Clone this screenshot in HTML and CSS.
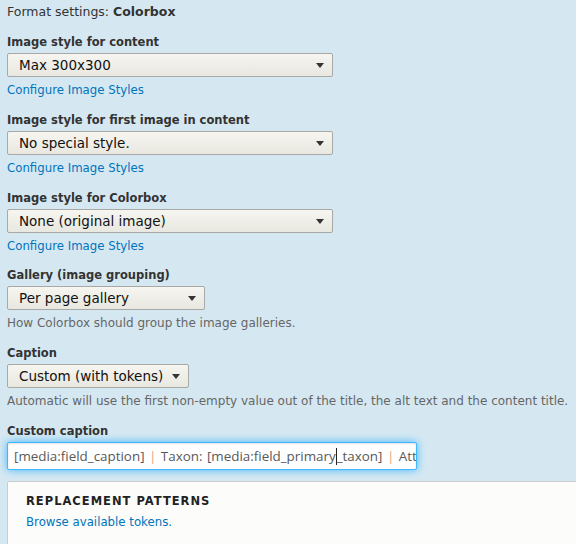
FILE: index.html
```html
<!DOCTYPE html>
<html>
<head>
<meta charset="utf-8">
<link rel="stylesheet" href="styles.css">
</head>
<body>
<div class="settings">
  <div class="title">Format settings: <strong>Colorbox</strong></div>

  <div class="item">
    <div class="label">Image style for content</div>
    <div class="select w-wide"><span class="select-text">Max 300x300</span><span class="arrow"></span></div>
    <a class="link" href="#">Configure Image Styles</a>
  </div>

  <div class="item">
    <div class="label">Image style for first image in content</div>
    <div class="select w-wide"><span class="select-text">No special style.</span><span class="arrow"></span></div>
    <a class="link" href="#">Configure Image Styles</a>
  </div>

  <div class="item">
    <div class="label">Image style for Colorbox</div>
    <div class="select w-wide"><span class="select-text">None (original image)</span><span class="arrow"></span></div>
    <a class="link" href="#">Configure Image Styles</a>
  </div>

  <div class="item item-tight">
    <div class="label">Gallery (image grouping)</div>
    <div class="select w-gallery"><span class="select-text">Per page gallery</span><span class="arrow"></span></div>
    <div class="desc">How Colorbox should group the image galleries.</div>
  </div>

  <div class="item">
    <div class="label">Caption</div>
    <div class="select w-caption"><span class="select-text">Custom (with tokens)</span><span class="arrow"></span></div>
    <div class="desc">Automatic will use the first non-empty value out of the title, the alt text and the content title.</div>
  </div>

  <div class="item">
    <div class="label">Custom caption</div>
    <div class="text-input"><span class="tv">[media:field_caption] <span class="pipe">|</span> Taxon: [media:field_primary<span class="caret"></span>_taxon] <span class="pipe">|</span> Attribution</span></div>
  </div>

  <div class="details">
    <div class="summary">Replacement patterns</div>
    <a class="link" href="#">Browse available tokens.</a>
  </div>
</div>
</body>
</html>
```

FILE: styles.css
```css
html, body {
  margin: 0;
  padding: 0;
  overflow: hidden;
}
body {
  background: #d5e8f2;
  font-family: "DejaVu Sans", Verdana, sans-serif;
  font-size: 11.5px;
  color: #333;
  width: 576px;
  height: 544px;
}
.settings {
  padding-left: 7px;
}
.title {
  margin-top: 4px;
  line-height: 16px;
  font-size: 12.5px;
  color: #333;
}
.title strong {
  font-weight: bold;
}
.item {
  margin-top: 14px;
}
.item-tight {
  margin-top: 13px;
}
.label {
  line-height: 16px;
  font-weight: bold;
  font-size: 11.5px;
  color: #333;
}
.select {
  margin-top: 3px;
  height: 24px;
  box-sizing: border-box;
  border: 1px solid #a8a8a6;
  border-radius: 2px;
  background: linear-gradient(#f6f5f0, #e8e7e0);
  display: flex;
  align-items: center;
  justify-content: space-between;
  padding: 0 8px 0 11px;
}
.w-wide { width: 326px; }
.w-gallery { width: 198px; }
.w-caption { width: 182px; }
.select-text {
  font-size: 13.5px;
  color: #111;
  white-space: nowrap;
}
.arrow {
  width: 0;
  height: 0;
  border-left: 4px solid transparent;
  border-right: 4px solid transparent;
  border-top: 5px solid #333;
}
.link {
  display: block;
  margin-top: 5px;
  line-height: 16px;
  color: #0074bd;
  text-decoration: none;
  font-size: 11.75px;
}
.desc {
  margin-top: 5px;
  line-height: 16px;
  color: #666;
  font-size: 12px;
  white-space: nowrap;
}
.text-input {
  margin-top: 3px;
  width: 410px;
  height: 28px;
  box-sizing: border-box;
  border: 1px solid #40b6ff;
  border-radius: 2px;
  background: #fff;
  box-shadow: inset 0 1px 2px rgba(0,0,0,.125), 0 0 8px #40b6ff;
  padding: 0 4px 0 6px;
  overflow: hidden;
  white-space: nowrap;
  display: flex;
  align-items: center;
}
.tv {
  font-family: "Open Sans", sans-serif;
  font-size: 13.4px;
  color: #595959;
  word-spacing: 1px;
}
.pipe {
  color: #e8a878;
}
.caret {
  display: inline-block;
  width: 0;
  height: 17px;
  border-left: 1px solid #222;
  vertical-align: -4px;
}
.details {
  margin-top: 11px;
  width: 640px;
  height: 80px;
  box-sizing: border-box;
  border: 1px solid #ccc;
  border-radius: 2px;
  background: #fcfcfa;
  padding: 11px 18px 0;
}
.summary {
  line-height: 16px;
  font-weight: bold;
  text-transform: uppercase;
  letter-spacing: 1px;
  color: #222;
  font-size: 11.5px;
}
.details .link {
  margin-top: 5px;
}
```
